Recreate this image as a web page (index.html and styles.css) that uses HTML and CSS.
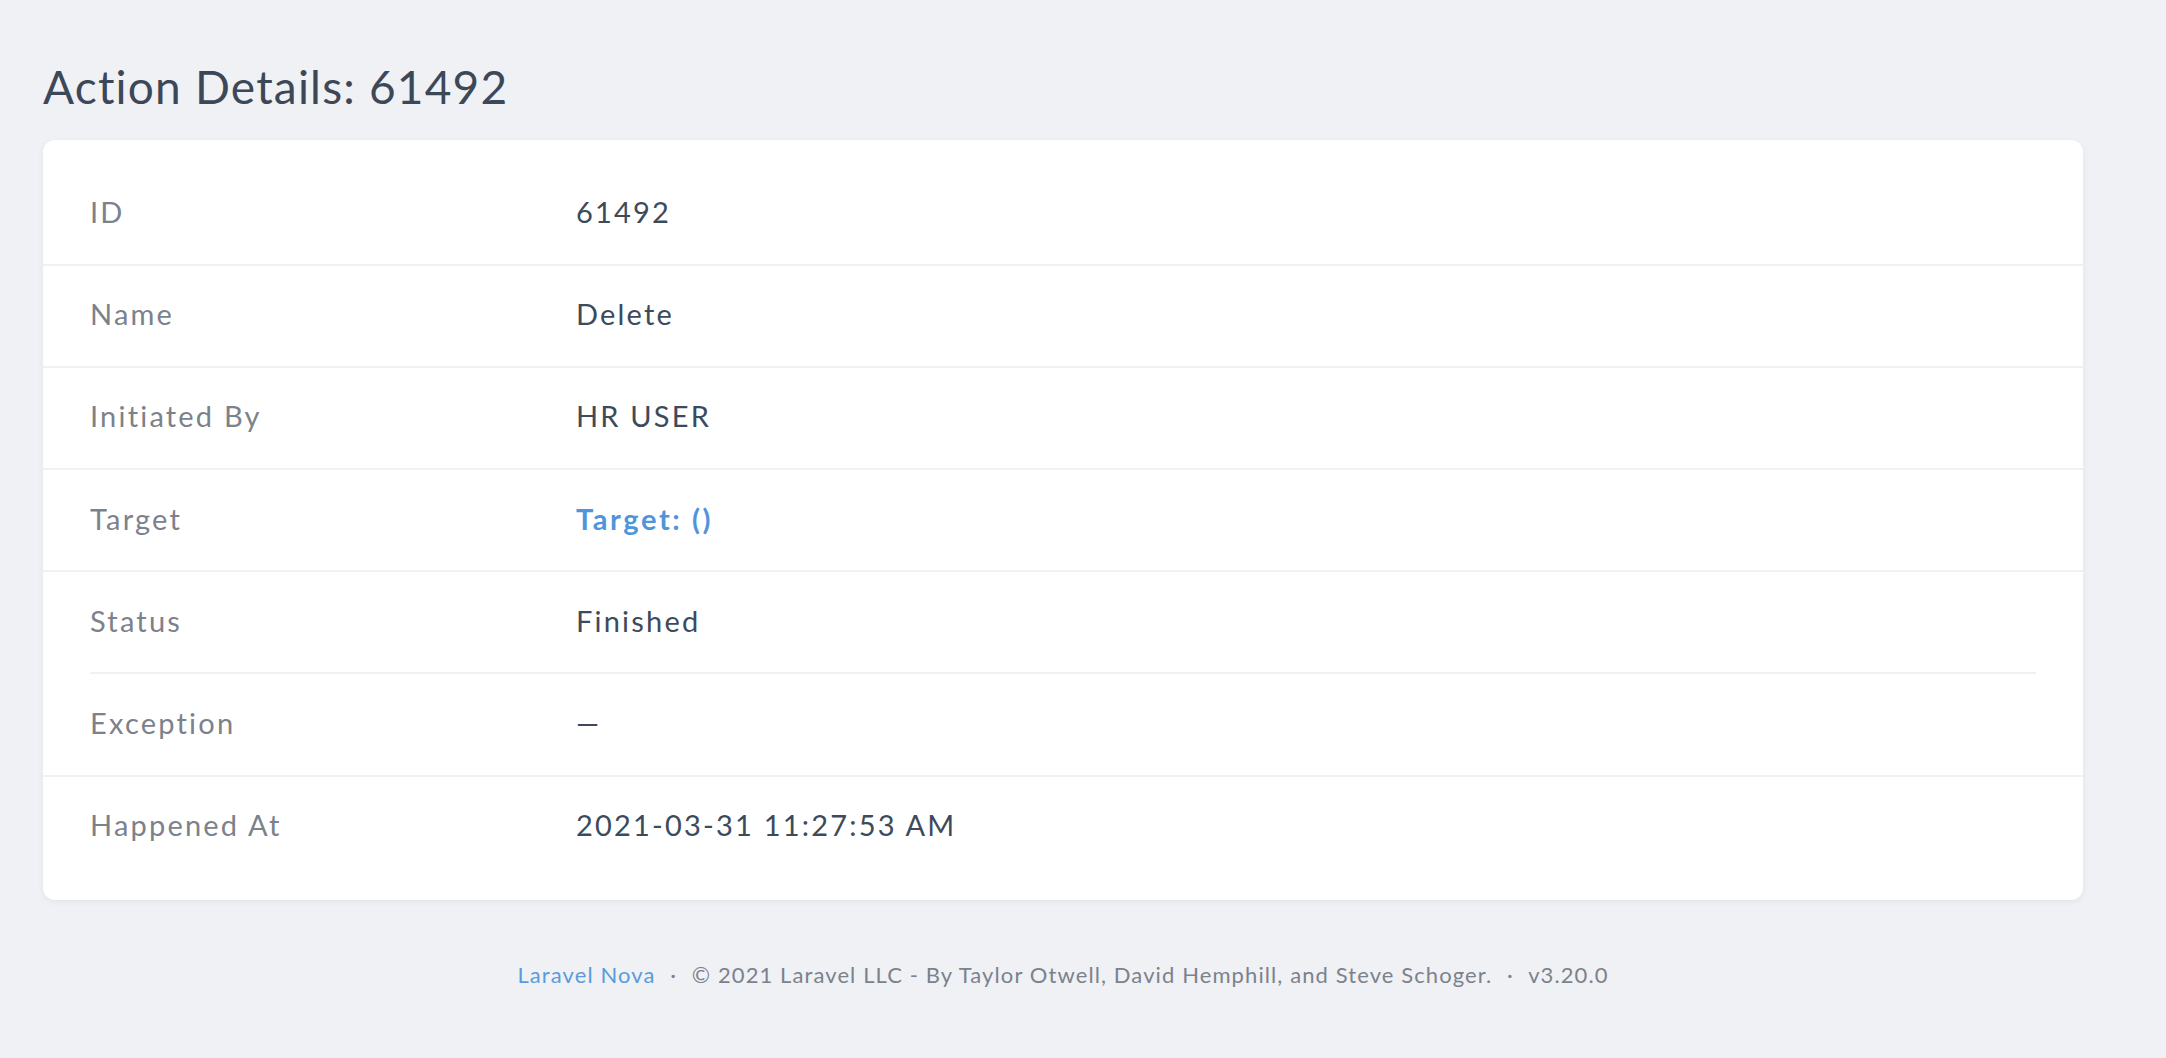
FILE: index.html
```html
<!DOCTYPE html>
<html lang="en">
<head>
    <title>Action Details: 61492</title>
    <meta charset="UTF-8">
    <link rel="stylesheet" href="styles.css">
</head>
<body>
<div class="page">
    <h1 class="title">Action Details: 61492</h1>

    <div class="card">
        <div class="row">
            <div class="label">ID</div>
            <div class="value">61492</div>
        </div>
        <div class="row">
            <div class="label">Name</div>
            <div class="value">Delete</div>
        </div>
        <div class="row">
            <div class="label">Initiated By</div>
            <div class="value">HR USER</div>
        </div>
        <div class="row">
            <div class="label">Target</div>
            <div class="value"><a href="#" class="link">Target: ()</a></div>
        </div>
        <div class="row row-inset">
            <div class="label">Status</div>
            <div class="value">Finished</div>
        </div>
        <div class="row">
            <div class="label">Exception</div>
            <div class="value">&mdash;</div>
        </div>
        <div class="row row-last">
            <div class="label">Happened At</div>
            <div class="value">2021-03-31 11:27:53 AM</div>
        </div>
    </div>

    <p class="footer">
        <a href="#" class="footer-link">Laravel Nova</a>
        <span class="dot">&middot;</span>
        &copy; 2021 Laravel LLC - By Taylor Otwell, David Hemphill, and Steve Schoger.
        <span class="dot">&middot;</span>
        v3.20.0
    </p>
</div>
</body>
</html>
```

FILE: styles.css
```css
body {
    margin: 0;
    background-color: #eff1f5;
    font-family: Lato, "Noto Sans", sans-serif;
    color: #3d4852;
}

.page {
    width: 2040px;
    margin-left: 43px;
}

.title {
    margin: 0;
    padding-top: 61px;
    font-size: 46px;
    font-weight: 400;
    line-height: 52px;
    letter-spacing: 1.2px;
    color: #3c4858;
}

.card {
    margin-top: 27px;
    padding: 23.5px 0 23px;
    background-color: #fff;
    border-radius: 12px;
    box-shadow: 0 2px 6px rgba(0, 0, 0, 0.06);
}

.row {
    display: flex;
    align-items: center;
    height: 100.2px;
    padding: 0 47px;
    border-bottom: 2px solid #eff1f5;
    font-size: 29px;
    letter-spacing: 2.2px;
}

.row-inset {
    margin: 0 47px;
    padding: 0;
}

.row-last {
    border-bottom: none;
}

.label {
    width: 486px;
    margin-bottom: 4px;
    color: #7b828c;
}

.value {
    margin-bottom: 4px;
    color: #3d4a5c;
}

.link {
    color: #4f95dc;
    font-weight: 700;
    text-decoration: none;
    letter-spacing: 2.6px;
}

.footer {
    margin: 60px 0 0;
    text-align: center;
    font-size: 22px;
    line-height: 30px;
    letter-spacing: 1.1px;
    color: #7b828c;
}

.footer-link {
    color: #5a9bdc;
    text-decoration: none;
}

.dot {
    margin: 0 8px;
}
```
